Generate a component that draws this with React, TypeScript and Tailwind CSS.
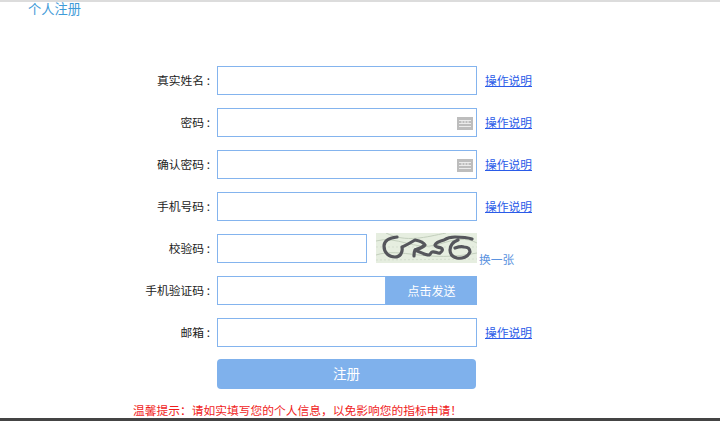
const font = { fontFamily: '"Noto Sans CJK SC", sans-serif' };

function Keyboard() {
  return (
    <svg width="16" height="13" viewBox="0 0 16 13" className="absolute right-[3px] top-[8px]">
      <rect width="16" height="13" fill="#bdbdbd" />
      <path d="M2 3.5h12M2 6.5h12M2 9.5h12M5 3v4M8 3v4M11 3v4" stroke="#ececec" strokeWidth="1" fill="none" />
    </svg>
  );
}

function Help() {
  return <a className="mb-[2px] ml-[8px] text-[11.75px] leading-none text-[#2a5be8] underline">操作说明</a>;
}

function Row({ label, children }: { label: string; children: React.ReactNode }) {
  return (
    <div className="flex h-[29px] items-center">
      <div className="mb-[2px] flex w-[210px] justify-end whitespace-nowrap text-[11.75px] text-[#222]">
        <span>{label}</span>
        <span className="w-[6px] text-right">:</span>
      </div>
      <div className="ml-[7px] flex h-full items-center">{children}</div>
    </div>
  );
}

function Field({ kb }: { kb?: boolean }) {
  return (
    <div className="relative h-[29px] w-[260px] border border-[#84b4ee] bg-white">
      {kb && <Keyboard />}
    </div>
  );
}

function Captcha() {
  return (
    <svg width="101" height="30" viewBox="0 0 101 30" className="block">
      <rect width="101" height="30" fill="#e6eee0" />
      <path d="M0 8C20 2 40 18 60 12S90 4 101 10M0 22C25 14 50 30 101 20M10 0C30 10 50 4 70 0" stroke="#c3cfbd" strokeWidth="1" fill="none" />
      <path d="M0 14L101 14M0 27L101 26" stroke="#d5dfd0" strokeWidth="1" fill="none" strokeDasharray="2 2" />
      <path
        d="M21 4C13 5 8 8 8 13C8 20 13 24 19 24C24 24 27 20 26 14C29 13 34 10 39 7C44 8 48 10 49 12C46 15 42 16 39 17C38 19 38 21 38 23M39 17C44 19 49 22 53 22C55 21 55 19 56 19C59 18 62 21 64 20C67 18 67 16 65 15C62 14 59 14 59 12C60 9 64 8 68 7C71 5 75 4 79 4C84 4 90 4 96 6M82 7C77 9 74 13 74 17C74 22 77 24 81 25C86 26 92 24 94 19C94 15 91 14 88 14C85 13 82 14 79 15"
        stroke="#55565c"
        strokeWidth="3.2"
        fill="none"
        strokeLinecap="round"
        strokeLinejoin="round"
      />
    </svg>
  );
}

export default function App() {
  return (
    <div className="flex h-[421px] w-[720px] flex-col overflow-hidden bg-white" style={font}>
      <div className="h-[2px] shrink-0 bg-[#dcdcdc]" />
      <div className="h-[64px] shrink-0 pl-[28px] text-[13.25px] leading-[13px] text-[#3f9bd8]">个人注册</div>
      <div className="flex flex-1 flex-col">
        <div className="flex flex-col gap-[13px]">
          <Row label="真实姓名"><Field /><Help /></Row>
          <Row label="密码"><Field kb /><Help /></Row>
          <Row label="确认密码"><Field kb /><Help /></Row>
          <Row label="手机号码"><Field /><Help /></Row>
          <Row label="校验码">
            <div className="h-[29px] w-[150px] border border-[#84b4ee] bg-white" />
            <div className="ml-[9px] -mt-[1px]"><Captcha /></div>
            <a className="ml-[2px] -mb-[2px] self-end text-[11.75px] leading-[13px] text-[#5b93e0]">换一张</a>
          </Row>
          <Row label="手机验证码">
            <div className="h-[29px] w-[169px] border border-[#84b4ee] bg-white" />
            <div className="flex h-[29px] w-[91px] items-center justify-center bg-[#7fb1ec] text-[12px] text-white">点击发送</div>
          </Row>
          <Row label="邮箱"><Field /><Help /></Row>
        </div>
        <div className="ml-[217px] mt-[12px] flex h-[30px] w-[259px] items-center justify-center rounded-[4px] bg-[#7fb1ec] pb-[2px] text-[13.5px] text-white">注册</div>
        <div className="ml-[133px] mt-[14px] whitespace-nowrap text-[11.75px] leading-[14px] text-[#f01c1c]">温馨提示：请如实填写您的个人信息，以免影响您的指标申请！</div>
      </div>
      <div className="h-[3px] shrink-0 bg-[#444]" />
    </div>
  );
}
